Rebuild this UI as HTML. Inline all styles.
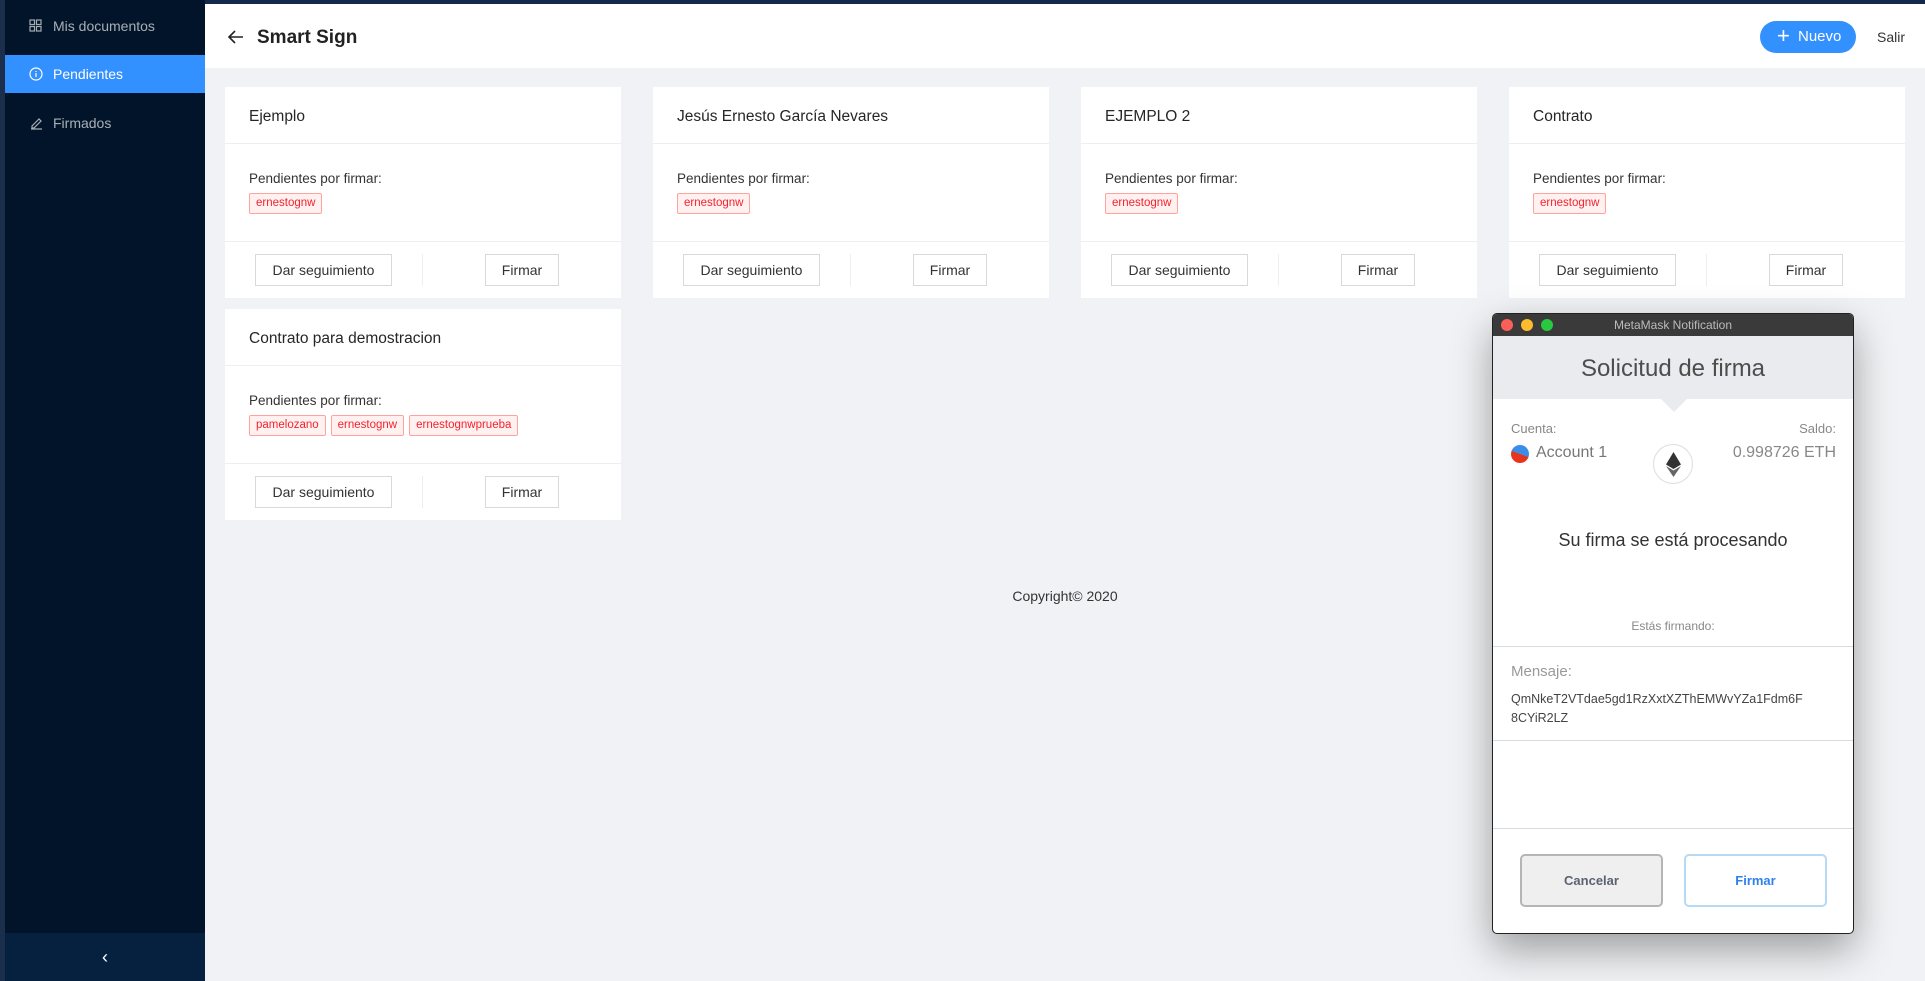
<!DOCTYPE html>
<html><head><meta charset="utf-8"><style>
*{box-sizing:border-box;margin:0;padding:0}
body{width:1925px;height:981px;overflow:hidden;background:#f0f2f5;font-family:"Liberation Sans",Arial,sans-serif;position:relative}
.top{position:absolute;left:0;top:0;width:1925px;height:4px;background:#14284a}
.side{position:absolute;left:0;top:0;width:205px;height:981px;background:#021429;border-left:5px solid #1b2f4d}
.item{position:absolute;left:0;width:200px;height:38px;color:rgba(255,255,255,.65);font-size:14px;line-height:38px;padding-left:48px}
.item svg{position:absolute;left:24px;top:12px}
.item.act{background:#3390ff;color:#fff}
.coll{position:absolute;left:0;bottom:0;width:200px;height:48px;background:#06203f;color:#fff;text-align:center;line-height:48px;font-size:18px}
.hdr{position:absolute;left:205px;top:4px;width:1720px;height:64px;background:#fff}
.card{position:absolute;width:396px;background:#fff}
.ch{height:57px;border-bottom:1px solid #eee;padding-left:24px;line-height:60px;font-size:15.5px;color:#262626}
.cb{height:98px;padding:27px 24px 0;font-size:13.5px;color:#333;border-bottom:1px solid #eee}
.tag{display:inline-block;margin-top:7px;margin-right:5px;height:21px;line-height:19px;padding:0 6px;font-size:11.5px;color:#f5222d;background:#fff1f0;border:1px solid #ffa39e;border-radius:2px}
.cf{height:56px;position:relative}
.btn{position:absolute;top:12px;height:32px;border:1px solid #d9d9d9;background:#fff;font-size:14px;color:#333;line-height:31px;text-align:center}
.vd{position:absolute;left:197px;top:12px;width:1px;height:32px;background:#eee}
.mm{position:absolute;left:1492px;top:313px;width:362px;height:621px;background:#fff;border:1px solid #222;border-radius:5px;box-shadow:0 16px 40px rgba(0,0,0,.35);overflow:hidden;font-family:"Liberation Sans",Arial,sans-serif}
.tb{height:22px;background:#3a3a3a;color:#bbb;font-size:12px;text-align:center;line-height:22px;position:relative}
.dot{position:absolute;top:5px;width:12px;height:12px;border-radius:50%}
</style></head><body>
<div class="top"></div>
<div class="side">
 <div class="item" style="top:7px"><svg width="13" height="13" viewBox="0 0 13 13" fill="none" stroke="#a6adb4" stroke-width="1.2"><rect x="1" y="1" width="4.5" height="4.5"/><rect x="7.5" y="1" width="4.5" height="4.5"/><rect x="1" y="7.5" width="4.5" height="4.5"/><rect x="7.5" y="7.5" width="4.5" height="4.5"/></svg>Mis documentos</div>
 <div class="item act" style="top:55px"><svg width="14" height="14" viewBox="0 0 14 14" fill="none" stroke="#fff" stroke-width="1.2"><circle cx="7" cy="7" r="6"/><path d="M7 6v4M7 4v1"/></svg>Pendientes</div>
 <div class="item" style="top:104px"><svg width="14" height="14" viewBox="0 0 14 14" fill="none" stroke="#a6adb4" stroke-width="1.2"><path d="M2 13h11M3 10l7-7 2 2-7 7H3z"/></svg>Firmados</div>
 <div class="coll">&#8249;</div>
</div>
<div class="hdr">
 <svg style="position:absolute;left:23px;top:26px" width="16" height="14" viewBox="0 0 16 14" fill="none" stroke="#222" stroke-width="1.6"><path d="M15 7H2M7 1L1 7l6 6"/></svg>
 <div style="position:absolute;left:52px;top:23px;font-size:19px;color:#222;font-weight:bold">Smart Sign</div>
 <div style="position:absolute;left:1555px;top:17px;width:96px;height:32px;border-radius:16px;background:#3390ff;color:#fff;font-size:15px;line-height:32px;padding-left:38px"><span style="position:absolute;left:17px;top:-1px;font-size:22px">+</span>Nuevo</div>
 <div style="position:absolute;left:1672px;top:25px;font-size:14px;color:#333">Salir</div>
</div>

<div class="card" style="left:225px;top:87px"><div class="ch">Ejemplo</div><div class="cb">Pendientes por firmar:<br><span class="tag">ernestognw</span></div><div class="cf"><div class="btn" style="left:30px;width:137px">Dar seguimiento</div><div class="vd"></div><div class="btn" style="left:260px;width:74px">Firmar</div></div></div>
<div class="card" style="left:653px;top:87px"><div class="ch">Jesús Ernesto García Nevares</div><div class="cb">Pendientes por firmar:<br><span class="tag">ernestognw</span></div><div class="cf"><div class="btn" style="left:30px;width:137px">Dar seguimiento</div><div class="vd"></div><div class="btn" style="left:260px;width:74px">Firmar</div></div></div>
<div class="card" style="left:1081px;top:87px"><div class="ch">EJEMPLO 2</div><div class="cb">Pendientes por firmar:<br><span class="tag">ernestognw</span></div><div class="cf"><div class="btn" style="left:30px;width:137px">Dar seguimiento</div><div class="vd"></div><div class="btn" style="left:260px;width:74px">Firmar</div></div></div>
<div class="card" style="left:1509px;top:87px"><div class="ch">Contrato</div><div class="cb">Pendientes por firmar:<br><span class="tag">ernestognw</span></div><div class="cf"><div class="btn" style="left:30px;width:137px">Dar seguimiento</div><div class="vd"></div><div class="btn" style="left:260px;width:74px">Firmar</div></div></div>
<div class="card" style="left:225px;top:309px"><div class="ch">Contrato para demostracion</div><div class="cb">Pendientes por firmar:<br><span class="tag">pamelozano</span><span class="tag">ernestognw</span><span class="tag">ernestognwprueba</span></div><div class="cf"><div class="btn" style="left:30px;width:137px">Dar seguimiento</div><div class="vd"></div><div class="btn" style="left:260px;width:74px">Firmar</div></div></div>

<div style="position:absolute;left:965px;top:588px;width:200px;text-align:center;font-size:14px;color:#333">Copyright© 2020</div>

<div class="mm">
 <div class="tb"><span class="dot" style="left:8px;background:#fc5f57"></span><span class="dot" style="left:28px;background:#fdbc2e"></span><span class="dot" style="left:48px;background:#28c840"></span>MetaMask Notification</div>
 <div style="height:63px;background:#e9ebee;text-align:center;line-height:66px;font-size:24px;color:#4d4d4d">Solicitud de firma</div>
 <div style="position:absolute;left:168px;top:85px;width:0;height:0;border-left:13px solid transparent;border-right:13px solid transparent;border-top:13px solid #e9ebee"></div>
 <div style="position:absolute;left:18px;top:107px;font-size:13px;color:#888">Cuenta:</div>
 <div style="position:absolute;right:17px;top:107px;font-size:13px;color:#888">Saldo:</div>
 <div style="position:absolute;left:18px;top:131px;width:18px;height:18px;border-radius:50%;background:linear-gradient(200deg,#3b8ee8 50%,#e8341c 50%)"></div>
 <div style="position:absolute;left:43px;top:130px;font-size:16px;color:#777">Account 1</div>
 <div style="position:absolute;right:17px;top:130px;font-size:16px;color:#888">0.998726 ETH</div>
 <div style="position:absolute;left:160px;top:130px;width:40px;height:40px;border-radius:50%;border:1px solid #ddd;background:#fff"><svg style="position:absolute;left:12px;top:7px" width="15" height="25" viewBox="0 0 15 25"><path d="M7.5 0L0 12.5 7.5 17 15 12.5z" fill="#333"/><path d="M0 14l7.5 11 7.5-11-7.5 4.5z" fill="#666"/></svg></div>
 <div style="position:absolute;left:0;width:100%;top:216px;text-align:center;font-size:18px;color:#333">Su firma se está procesando</div>
 <div style="position:absolute;left:0;width:100%;top:305px;text-align:center;font-size:12px;color:#888">Estás firmando:</div>
 <div style="position:absolute;left:0;width:100%;top:332px;border-top:1px solid #d8dbe0"></div>
 <div style="position:absolute;left:18px;top:349px;font-size:15px;color:#999">Mensaje:</div>
 <div style="position:absolute;left:18px;top:376px;width:340px;font-size:12.5px;color:#444;line-height:19px;white-space:nowrap">QmNkeT2VTdae5gd1RzXxtXZThEMWvYZa1Fdm6F<br>8CYiR2LZ</div>
 <div style="position:absolute;left:0;width:100%;top:426px;border-top:1px solid #d8dbe0"></div>
 <div style="position:absolute;left:0;width:100%;top:514px;border-top:1px solid #d8dbe0"></div>
 <div style="position:absolute;left:27px;top:540px;width:143px;height:53px;border:2px solid #b5b5b5;border-radius:5px;background:#efefef;text-align:center;line-height:49px;font-size:13px;font-weight:bold;color:#5b6270">Cancelar</div>
 <div style="position:absolute;left:191px;top:540px;width:143px;height:53px;border:2px solid #b6d9f5;border-radius:5px;background:#fff;text-align:center;line-height:49px;font-size:13px;font-weight:bold;color:#2f80ed">Firmar</div>
</div>
</body></html>
